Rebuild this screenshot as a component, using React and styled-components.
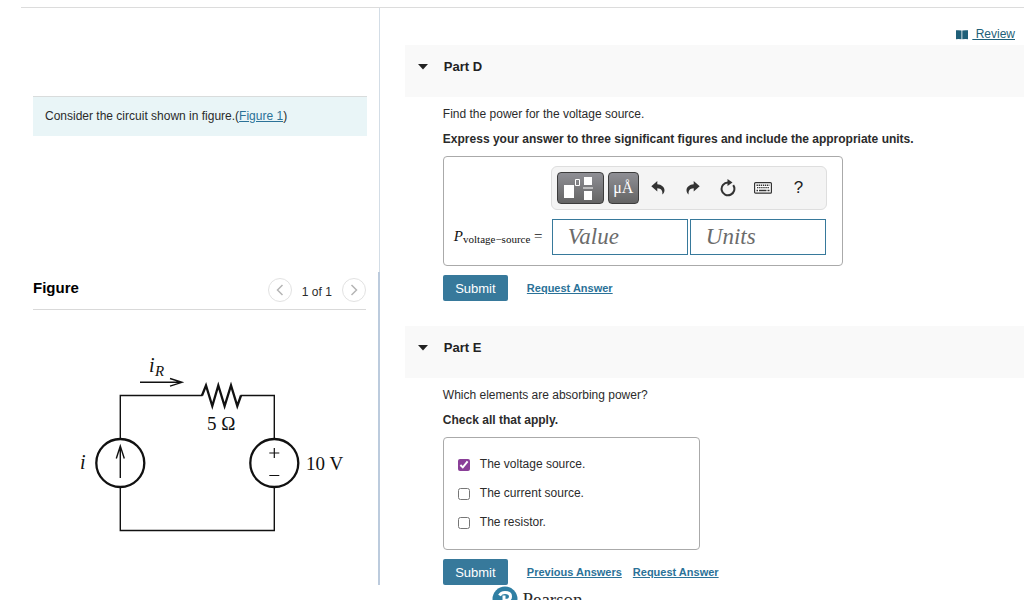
import React from 'react';
import styled, { createGlobalStyle } from 'styled-components';

const choices = [
	{ id: 'voltage', label: 'The voltage source.', checked: true },
	{ id: 'current', label: 'The current source.', checked: false },
	{ id: 'resistor', label: 'The resistor.', checked: false },
];

function Circuit() {
	return (
		<CircuitSvg viewBox="80 352 270 184" role="img" aria-label="Circuit">
			<g fill="none" stroke="#111" strokeWidth="1.4">
				<path d="M120.300 439V395.500H202.500M240.500 395.500H274.300V439M120.300 487V530.500H274.300V487" />
				<path d="M140 382.300H181M170 378.500L182 382.300L170 386.100" />
				<path d="M120.300 478V447M116.300 458.500L120.300 446L124.300 458.500" />
				<path d="M269.300 453H279.300M274.300 448V458M269.300 475.500H279.300" strokeWidth="1.200" />
				<path
					d="M202 395.500L206 385.500L212.300 406L218.300 385.500L224.600 406L231 385.500L237.300 406L241 395.500"
					strokeWidth="2.300"
				/>
				<circle cx="120.300" cy="463" r="24" strokeWidth="2.300" />
				<circle cx="274.300" cy="463" r="24" strokeWidth="2.300" />
			</g>
			<g fill="#111" fontFamily="'Liberation Serif', serif" fontSize="19">
				<text x="80" y="469" fontStyle="italic" fontSize="20">i</text>
				<text x="149" y="372" fontStyle="italic" fontSize="20">i</text>
				<text x="155" y="376" fontStyle="italic" fontSize="15">R</text>
				<text x="207" y="430">5 Ω</text>
				<text x="306" y="470">10 V</text>
			</g>
		</CircuitSvg>
	);
}

function TemplatesIcon() {
	return (
		<svg width="34" height="26" viewBox="0 0 34 26">
			<path fill="#fff" d="M1 10H11V23H1ZM21 2H29V10H21ZM21 16H29V25H21ZM20 12.400H30V13.600H20Z" />
			<path fill="none" stroke="#fff" d="M12.500 4.500H16.500V10.500H12.500Z" />
		</svg>
	);
}

function UndoIcon({ flip }) {
	return (
		<svg width="14" height="14" viewBox="0 0 14 14">
			<path
				fill="#333"
				transform={flip ? 'matrix(-1 0 0 1 14 0)' : undefined}
				d="M.3 5.200L6.300 0V3.200C10.500 3.400 13.500 6 13.500 9.200C13.500 11 12.600 12.600 11.300 13.600C11.900 9.800 10.300 7.500 6.300 7.300V10.500Z"
			/>
		</svg>
	);
}

function ResetIcon() {
	return (
		<svg width="18" height="18" viewBox="0 0 18 18">
			<path fill="none" stroke="#333" strokeWidth="2" d="M9 3.500A6.400 6.400 0 1 0 14.200 6.200" />
			<path fill="#333" d="M8.500 0L13.500 3.400L8.500 7Z" />
		</svg>
	);
}

function KeyboardIcon() {
	return (
		<svg width="18" height="12" viewBox="0 0 18 12">
			<rect x=".6" y=".6" width="16.800" height="10.600" rx="1" fill="#fff" stroke="#333" strokeWidth="1.200" />
			<path
				fill="none"
				stroke="#333"
				strokeWidth="1.400"
				d="M2.500 3.200H15.500M3 5.600H15.500"
				strokeDasharray="1.400 .7"
			/>
			<path fill="none" stroke="#333" strokeWidth="1.400" d="M2.500 8.500H4M5 8.500H12.500M13.500 8.500H15.500" />
		</svg>
	);
}

function Chevron({ d }) {
	return (
		<svg width="8" height="12" viewBox="0 0 8 12">
			<path d={d} fill="none" stroke="#b5b5b5" strokeWidth="1.500" />
		</svg>
	);
}

function PartHeader({ title }) {
	return (
		<PartBar>
			<PartToggle type="button" aria-expanded="true">
				<svg width="10" height="6" viewBox="0 0 10 6">
					<path d="M0 0H10L5 5.500Z" fill="#222" />
				</svg>
				{title}
			</PartToggle>
		</PartBar>
	);
}

function App() {
	return (
		<Page>
			<GlobalStyle />
			<Columns>
				<aside>
					<Problem>
						<Intro>
							Consider the circuit shown in figure.(<a href="#figure">Figure 1</a>)
						</Intro>
					</Problem>
					<Figure id="figure">
						<FigureHeader>
							<h2>Figure</h2>
							<Pager>
								<RoundButton type="button" aria-label="Previous figure">
									<Chevron d="M6.500 1L1.500 6L6.500 11" />
								</RoundButton>
								<span>1 of 1</span>
								<RoundButton type="button" aria-label="Next figure">
									<Chevron d="M1.500 1L6.500 6L1.500 11" />
								</RoundButton>
							</Pager>
						</FigureHeader>
						<Circuit />
					</Figure>
				</aside>
				<Questions>
					<ReviewBar>
						<svg width="12" height="10" viewBox="0 0 12 10">
							<path fill="#1f5f78" d="M0 .3Q3 0 5.500 .5V9.300Q3 8.900 0 9.200ZM6.300 .5Q9 0 12 .3V9.200Q9 8.900 6.300 9.300Z" />
						</svg>
						<a href="#review">&nbsp;Review</a>
					</ReviewBar>

					<PartHeader title="Part D" />
					<PartBody>
						<p>Find the power for the voltage source.</p>
						<p><b>Express your answer to three significant figures and include the appropriate units.</b></p>
						<AnswerBox>
							<Toolbar>
								<DarkButton type="button" $wide aria-label="Templates"><TemplatesIcon /></DarkButton>
								<DarkButton type="button">μÅ</DarkButton>
								<Tools>
									<ToolButton type="button" aria-label="Undo"><UndoIcon /></ToolButton>
									<ToolButton type="button" aria-label="Redo"><UndoIcon flip /></ToolButton>
									<ToolButton type="button" aria-label="Reset"><ResetIcon /></ToolButton>
									<ToolButton type="button" aria-label="Keyboard"><KeyboardIcon /></ToolButton>
									<ToolButton type="button">?</ToolButton>
								</Tools>
							</Toolbar>
							<MathLabel htmlFor="value">
								<i>P</i><small>voltage−source</small> =
							</MathLabel>
							<Fields>
								<MathInput id="value" placeholder="Value" />
								<MathInput aria-label="Units" placeholder="Units" />
							</Fields>
						</AnswerBox>
						<Actions>
							<Submit type="button">Submit</Submit>
							<a href="#request">Request Answer</a>
						</Actions>
					</PartBody>

					<PartHeader title="Part E" />
					<PartBody $last>
						<p>Which elements are absorbing power?</p>
						<p><b>Check all that apply.</b></p>
						<ChoiceBox>
							{choices.map((choice) => (
								<Choice key={choice.id}>
									<input type="checkbox" defaultChecked={choice.checked} />
									{choice.label}
								</Choice>
							))}
						</ChoiceBox>
						<Actions>
							<Submit type="button">Submit</Submit>
							<a href="#previous">Previous Answers</a>
							<a href="#request">Request Answer</a>
						</Actions>
					</PartBody>
				</Questions>
			</Columns>
			<Footer>
				<svg width="26" height="26" viewBox="0 0 26 26">
					<circle cx="13" cy="13" r="12.500" fill="#2f7fa3" />
					<path
						d="M7.500 9.500Q9 6.500 13 6.500Q18.500 6.500 18.500 10.500Q18.500 14.500 13 14.500M12 9.500V20"
						fill="none"
						stroke="#fff"
						strokeWidth="3"
					/>
				</svg>
				Pearson
			</Footer>
		</Page>
	);
}

const GlobalStyle = createGlobalStyle`
	* {
		box-sizing: border-box;
	}
	body {
		margin: 0;
		background: #fff;
		color: #2b2b2b;
		font: 12px/17px 'Liberation Sans', Arial, sans-serif;
	}
	a {
		color: #2b7298;
	}
	button {
		font-family: inherit;
		cursor: pointer;
	}
	svg {
		display: block;
	}
`;

const Page = styled.div`
	padding: 7px 0 0 21px;
`;

const Columns = styled.main`
	display: grid;
	grid-template-columns: minmax(0, 39fr) minmax(0, 70fr);
	border-top: 1px solid #dcdcdc;

	aside {
		display: flex;
		flex-direction: column;
	}
`;

const Problem = styled.section`
	padding: 88px 12px 136px;
	border-right: 1px solid #d3dde6;
`;

const Intro = styled.div`
	padding: 11px 12px;
	border-top: 1px solid #d9dcdc;
	background: #e9f5f7;
`;

const Figure = styled.section`
	flex: 1;
	padding: 6px 12px 0;
	border-right: 2px solid #bccbdd;
`;

const FigureHeader = styled.header`
	display: flex;
	align-items: center;
	justify-content: space-between;
	padding-bottom: 7px;
	border-bottom: 1px solid #d9d9d9;

	h2 {
		margin: 0 0 5px;
		color: #000;
		font-size: 15px;
	}
`;

const Pager = styled.div`
	display: flex;
	align-items: center;
	gap: 10px;

	span {
		padding-top: 4px;
	}
`;

const RoundButton = styled.button`
	display: grid;
	place-items: center;
	width: 24px;
	height: 24px;
	padding: 0;
	border: 1px solid #e2e2e2;
	border-radius: 50%;
	background: #fff;
`;

const CircuitSvg = styled.svg`
	width: 270px;
	margin: 42px 0 0 47px;
`;

const Questions = styled.div`
	padding-left: 25px;
`;

const ReviewBar = styled.div`
	display: flex;
	align-items: center;
	justify-content: flex-end;
	gap: 4px;
	padding: 18px 9px 2px;

	a {
		color: #1f5f78;
	}
`;

const PartBar = styled.h2`
	height: 52px;
	margin: 0;
	padding: 13px;
	background: #f9f9f9;
	font-size: 13px;
`;

const PartToggle = styled.button`
	display: flex;
	align-items: center;
	gap: 16px;
	padding: 0;
	border: 0;
	background: none;
	color: #222;
	font-size: 13px;
	font-weight: bold;
	line-height: 17px;
`;

const PartBody = styled.section`
	padding: 9px 38px ${(props) => (props.$last ? '0' : '25px')};

	p {
		margin: 0 0 8px;
	}
`;

const AnswerBox = styled.div`
	display: grid;
	grid-template-columns: 1fr 276px;
	align-items: center;
	row-gap: 9px;
	max-width: 400px;
	padding: 9px 15px 10px 10px;
	border: 1px solid #aaa;
	border-radius: 4px;
`;

const Toolbar = styled.div`
	grid-column: 2;
	display: flex;
	gap: 4px;
	padding: 5px;
	border: 1px solid #dedede;
	border-radius: 6px;
	background: #f4f4f4;
`;

const DarkButton = styled.button`
	display: grid;
	place-items: center;
	width: ${(props) => (props.$wide ? '47px' : '31px')};
	height: 32px;
	padding: 0;
	border: 1px solid #3c3c3c;
	border-radius: 4px;
	background: linear-gradient(#8f8f95, #646464);
	color: #fff;
	font-family: 'Liberation Serif', serif;
	font-size: 16px;
`;

const Tools = styled.div`
	display: flex;
	margin-left: -2px;
`;

const ToolButton = styled.button`
	display: grid;
	place-items: center;
	width: 35px;
	padding: 0;
	border: 0;
	background: none;
	color: #222;
	font-size: 17px;
`;

const MathLabel = styled.label`
	color: #111;
	font-family: 'Liberation Serif', serif;
	font-size: 15px;

	small {
		position: relative;
		top: 2px;
		font-size: 11px;
	}
`;

const Fields = styled.div`
	display: grid;
	grid-template-columns: 1fr 1fr;
	gap: 2px;
	padding: 0 1px;
`;

const MathInput = styled.input`
	width: 100%;
	height: 36px;
	padding: 0 15px;
	border: 1px solid #37799b;
	font: italic 23px 'Liberation Serif', serif;

	&::placeholder {
		color: #6b6b6b;
	}
`;

const Actions = styled.div`
	display: flex;
	align-items: center;
	gap: 11px;
	margin-top: 9px;

	a {
		font-size: 11px;
		font-weight: bold;
	}
`;

const Submit = styled.button`
	width: 65px;
	height: 26px;
	margin-right: 8px;
	padding: 0;
	border: 0;
	border-radius: 2px;
	background: #37799b;
	color: #fff;
	font-size: 13px;
`;

const ChoiceBox = styled.div`
	display: flex;
	flex-direction: column;
	gap: 12px;
	max-width: 257px;
	padding: 18px 14px;
	border: 1px solid #aaa;
	border-radius: 4px;
`;

const Choice = styled.label`
	display: flex;
	align-items: center;
	gap: 10px;

	input {
		width: 12px;
		height: 12px;
		margin: 0;
		accent-color: #8a3f98;
	}
`;

const Footer = styled.footer`
	display: flex;
	align-items: center;
	gap: 4px;
	padding: 1px 0 0 47%;
	font-family: 'Liberation Serif', serif;
	font-size: 19px;
`;

export default App;
